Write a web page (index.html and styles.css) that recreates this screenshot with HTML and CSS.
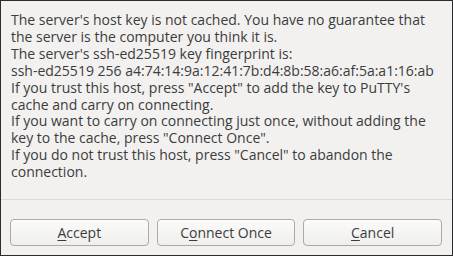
FILE: index.html
```html
<!DOCTYPE html>
<html>
<head>
<meta charset="utf-8">
<link rel="stylesheet" href="styles.css">
</head>
<body>
<div class="dialog">
  <div class="message">
    <span class="line">The server's host key is not cached. You have no guarantee that</span>
    <span class="line">the server is the computer you think it is.</span>
    <span class="line">The server's ssh-ed25519 key fingerprint is:</span>
    <span class="line">ssh-ed25519 256 a4:74:14:9a:12:41:7b:d4:8b:58:a6:af:5a:a1:16:ab</span>
    <span class="line">If you trust this host, press "Accept" to add the key to PuTTY's</span>
    <span class="line">cache and carry on connecting.</span>
    <span class="line">If you want to carry on connecting just once, without adding the</span>
    <span class="line">key to the cache, press "Connect Once".</span>
    <span class="line">If you do not trust this host, press "Cancel" to abandon the</span>
    <span class="line">connection.</span>
  </div>
  <div class="separator"></div>
  <div class="actions">
    <button class="btn"><u>A</u>ccept</button>
    <button class="btn">C<u>o</u>nnect Once</button>
    <button class="btn"><u>C</u>ancel</button>
  </div>
</div>
</body>
</html>
```

FILE: styles.css
```css
html, body {
  margin: 0;
  padding: 0;
}
body {
  width: 453px;
  height: 256px;
  background: #f2f1f0;
  font-family: "Open Sans", "Noto Sans", sans-serif;
  color: #3c3c3c;
}
.dialog {
  box-sizing: border-box;
  width: 453px;
  height: 256px;
  border: 1px solid #2b2b2b;
  background: #f2f1f0;
  display: flex;
  flex-direction: column;
}
.message {
  flex: 1;
  padding: 11px 10px 0 10px;
  display: flex;
  flex-direction: column;
  font-size: 14px;
  line-height: 16.9px;
  white-space: nowrap;
}
.separator {
  height: 1px;
  background: #dcdad6;
}
.actions {
  display: grid;
  grid-template-columns: 1fr 1fr 1fr;
  column-gap: 8px;
  padding: 19px 10px 9px 9px;
}
.btn {
  height: 27px;
  border: 1px solid #abaaa8;
  border-radius: 4px;
  background: linear-gradient(#fbfbfa, #efeeed);
  font-family: "Open Sans", "Noto Sans", sans-serif;
  font-size: 14px;
  color: #3c3c3c;
  padding: 0;
  box-shadow: inset 0 1px 0 #ffffff;
}
.btn u {
  text-decoration-thickness: 1px;
  text-underline-offset: 2px;
}
```
